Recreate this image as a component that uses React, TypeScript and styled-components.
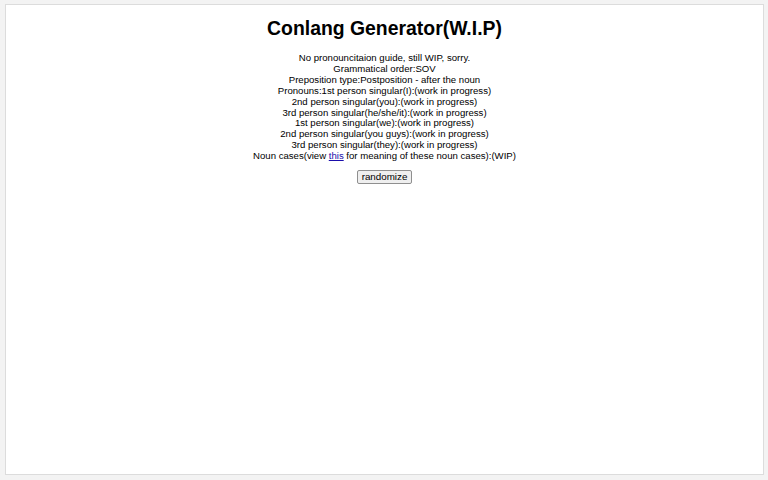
import styled, { createGlobalStyle } from 'styled-components';

const GlobalStyle = createGlobalStyle`
    html, body {
        margin: 0;
        padding: 0;
        background: #f3f3f3;
    }
    body {
        font-family: "Liberation Sans", Arial, sans-serif;
        color: #000;
    }
`;

const lines = [
    'No pronouncitaion guide, still WIP, sorry.',
    'Grammatical order:SOV',
    'Preposition type:Postposition - after the noun',
    'Pronouns:1st person singular(I):(work in progress)',
    '2nd person singular(you):(work in progress)',
    '3rd person singular(he/she/it):(work in progress)',
    '1st person singular(we):(work in progress)',
    '2nd person singular(you guys):(work in progress)',
    '3rd person singular(they):(work in progress)',
];

const App = () => {
    return (
        <Page>
            <GlobalStyle />
            <Panel>
                <Title>Conlang Generator(W.I.P)</Title>
                <Details>
                    {lines.map((line) => (
                        <Line key={line}>{line}</Line>
                    ))}
                    <Line>
                        Noun cases(view <Link href="#">this</Link> for meaning
                        of these noun cases):(WIP)
                    </Line>
                </Details>
                <Button type="button">randomize</Button>
            </Panel>
        </Page>
    );
};

export default App;

const Page = styled.div`
    box-sizing: border-box;
    width: 768px;
    height: 480px;
    padding: 4px 4px 5px 5px;
    display: flex;
`;

const Panel = styled.div`
    flex: 1;
    background: #fff;
    border: 1px solid #dcdcdc;
    display: flex;
    flex-direction: column;
    align-items: center;
    padding-top: 12px;
`;

const Title = styled.h1`
    margin: 0;
    font-size: 19.4px;
    font-weight: bold;
    line-height: 23px;
`;

const Details = styled.div`
    margin-top: 13px;
    display: flex;
    flex-direction: column;
    align-items: center;
    font-size: 9.6px;
    line-height: 10.9px;
`;

const Line = styled.div``;

const Link = styled.a`
    color: #1a0dab;
    text-decoration: underline;
`;

const Button = styled.button`
    margin-top: 8px;
    font-family: "Liberation Sans", Arial, sans-serif;
    font-size: 9.8px;
    line-height: 12px;
    padding: 0 4px;
    background: #efefef;
    border: 1px solid #8f8f8f;
    border-radius: 2px;
    color: #000;
`;
